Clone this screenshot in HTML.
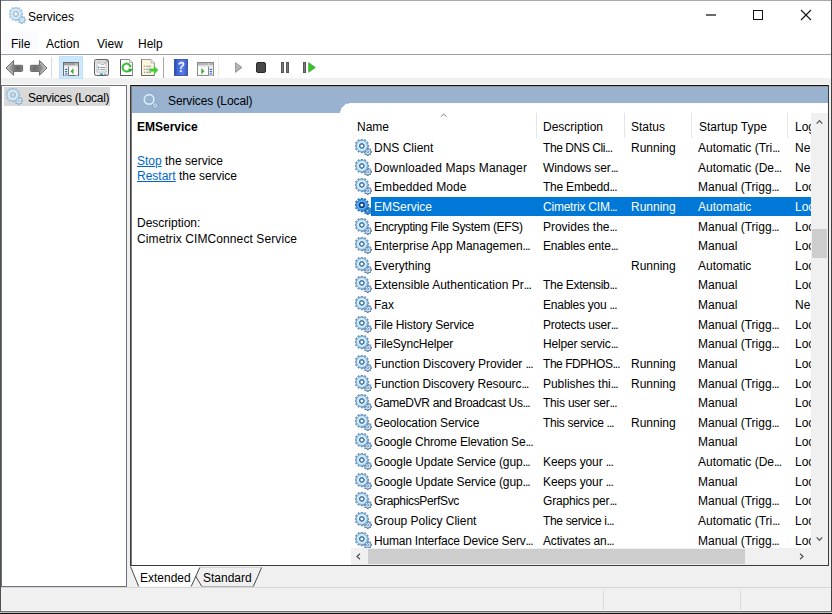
<!DOCTYPE html>
<html><head><meta charset="utf-8">
<style>
*{margin:0;padding:0;box-sizing:border-box}
html,body{width:832px;height:614px;overflow:hidden;background:#fff}
body{position:relative;font-family:"Liberation Sans",sans-serif;font-size:12px;color:#000}
.a{position:absolute}
.t{position:absolute;white-space:nowrap;line-height:15px}
.gi{position:absolute;left:4px;top:1px;width:17px;height:17px}
.row{position:absolute;left:351px;width:460px;height:19.63px;white-space:nowrap}
.row span{position:absolute;top:3px;line-height:15px}
.c1{left:23px} .c2{left:192px} .c3{left:280px} .c4{left:347px} .c5{left:444px}
.sel .c1,.sel .c2,.sel .c3,.sel .c4,.sel .c5{color:#fff}
.selbg{position:absolute;left:371px;width:440px;height:19px;background:#0078d7}
.hdr{position:absolute;top:120px;white-space:nowrap;line-height:15px}
.csep{position:absolute;top:113px;width:1px;height:25px;background:#e5e5e5}
.link{color:#0066cc;text-decoration:underline}
.el{font-style:normal;letter-spacing:-1px}
</style></head><body>
<svg width="0" height="0" style="position:absolute">
<defs>
<radialGradient id="gg" gradientUnits="userSpaceOnUse" cx="6.85" cy="6.95" r="7">
<stop offset="0.3" stop-color="#4a78a8"/><stop offset="0.42" stop-color="#d9f3fd"/><stop offset="0.68" stop-color="#c4e6f8"/><stop offset="0.84" stop-color="#86b3dc"/><stop offset="1" stop-color="#5584b8"/>
</radialGradient>
<radialGradient id="gsm" gradientUnits="userSpaceOnUse" cx="12.7" cy="12.8" r="3.9">
<stop offset="0.3" stop-color="#ffffff"/><stop offset="0.6" stop-color="#c8e4f6"/><stop offset="1" stop-color="#6f9ccb"/>
</radialGradient>
<radialGradient id="gl" gradientUnits="userSpaceOnUse" cx="6.85" cy="6.95" r="7">
<stop offset="0.3" stop-color="#ffffff"/><stop offset="0.42" stop-color="#b9cbd9"/><stop offset="0.52" stop-color="#e2f3fc"/><stop offset="0.78" stop-color="#c2e2f6"/><stop offset="1" stop-color="#92bde2"/>
</radialGradient>
<radialGradient id="gs" gradientUnits="userSpaceOnUse" cx="6.8" cy="7.1" r="7">
<stop offset="0.35" stop-color="#0b4f9a"/><stop offset="0.5" stop-color="#6ab8f5"/><stop offset="0.75" stop-color="#3d95e6"/><stop offset="1" stop-color="#1a6fc4"/>
</radialGradient>
<symbol id="gear" viewBox="0 0 17 17">
<path d="M15.53,12.15 L16.53,12.09 L16.53,13.51 L15.53,13.45 L15.16,14.34 L15.91,15.01 L14.91,16.01 L14.24,15.26 L13.35,15.63 L13.41,16.63 L11.99,16.63 L12.05,15.63 L11.16,15.26 L10.49,16.01 L9.49,15.01 L10.24,14.34 L9.87,13.45 L8.87,13.51 L8.87,12.09 L9.87,12.15 L10.24,11.26 L9.49,10.59 L10.49,9.59 L11.16,10.34 L12.05,9.97 L11.99,8.97 L13.41,8.97 L13.35,9.97 L14.24,10.34 L14.91,9.59 L15.91,10.59 L15.16,11.26Z M11.60,12.80 a1.1,1.1 0 1,0 2.2,0 a1.1,1.1 0 1,0 -2.2,0Z" fill="url(#gsm)" fill-rule="evenodd" stroke="#47729f" stroke-width="0.8"/>
<path d="M12.30,6.20 L13.81,6.17 L13.81,7.73 L12.30,7.70 L11.95,9.02 L13.26,9.76 L12.49,11.10 L11.19,10.33 L10.23,11.29 L11.00,12.59 L9.66,13.36 L8.92,12.05 L7.60,12.40 L7.63,13.91 L6.07,13.91 L6.10,12.40 L4.78,12.05 L4.04,13.36 L2.70,12.59 L3.47,11.29 L2.51,10.33 L1.21,11.10 L0.44,9.76 L1.75,9.02 L1.40,7.70 L-0.11,7.73 L-0.11,6.17 L1.40,6.20 L1.75,4.88 L0.44,4.14 L1.21,2.80 L2.51,3.57 L3.47,2.61 L2.70,1.31 L4.04,0.54 L4.78,1.85 L6.10,1.50 L6.07,-0.01 L7.63,-0.01 L7.60,1.50 L8.92,1.85 L9.66,0.54 L11.00,1.31 L10.23,2.61 L11.19,3.57 L12.49,2.80 L13.26,4.14 L11.95,4.88Z M5.05,6.95 a1.8,1.8 0 1,0 3.6,0 a1.8,1.8 0 1,0 -3.6,0Z" fill="url(#gg)" fill-rule="evenodd" stroke="#5b88b6" stroke-width="0.7"/>
<circle cx="6.85" cy="6.95" r="2.4" fill="none" stroke="#3d6b9c" stroke-width="0.9"/>
</symbol>
<symbol id="gearL" viewBox="0 0 17 17">
<path d="M15.53,12.15 L16.53,12.09 L16.53,13.51 L15.53,13.45 L15.16,14.34 L15.91,15.01 L14.91,16.01 L14.24,15.26 L13.35,15.63 L13.41,16.63 L11.99,16.63 L12.05,15.63 L11.16,15.26 L10.49,16.01 L9.49,15.01 L10.24,14.34 L9.87,13.45 L8.87,13.51 L8.87,12.09 L9.87,12.15 L10.24,11.26 L9.49,10.59 L10.49,9.59 L11.16,10.34 L12.05,9.97 L11.99,8.97 L13.41,8.97 L13.35,9.97 L14.24,10.34 L14.91,9.59 L15.91,10.59 L15.16,11.26Z M11.60,12.80 a1.1,1.1 0 1,0 2.2,0 a1.1,1.1 0 1,0 -2.2,0Z" fill="url(#gsm)" fill-rule="evenodd" stroke="#86aacb" stroke-width="0.6"/>
<path d="M12.30,6.20 L13.81,6.17 L13.81,7.73 L12.30,7.70 L11.95,9.02 L13.26,9.76 L12.49,11.10 L11.19,10.33 L10.23,11.29 L11.00,12.59 L9.66,13.36 L8.92,12.05 L7.60,12.40 L7.63,13.91 L6.07,13.91 L6.10,12.40 L4.78,12.05 L4.04,13.36 L2.70,12.59 L3.47,11.29 L2.51,10.33 L1.21,11.10 L0.44,9.76 L1.75,9.02 L1.40,7.70 L-0.11,7.73 L-0.11,6.17 L1.40,6.20 L1.75,4.88 L0.44,4.14 L1.21,2.80 L2.51,3.57 L3.47,2.61 L2.70,1.31 L4.04,0.54 L4.78,1.85 L6.10,1.50 L6.07,-0.01 L7.63,-0.01 L7.60,1.50 L8.92,1.85 L9.66,0.54 L11.00,1.31 L10.23,2.61 L11.19,3.57 L12.49,2.80 L13.26,4.14 L11.95,4.88Z M5.05,6.95 a1.8,1.8 0 1,0 3.6,0 a1.8,1.8 0 1,0 -3.6,0Z" fill="url(#gl)" fill-rule="evenodd" stroke="#8db3d6" stroke-width="0.6"/>
<circle cx="6.85" cy="6.95" r="2.7" fill="none" stroke="#a3b9cb" stroke-width="0.9"/>
</symbol>
<symbol id="gearG" viewBox="0 0 17 17">
<circle cx="12.2" cy="13.5" r="3" fill="none" stroke="#6f88a6" stroke-width="0.9" stroke-dasharray="0.8 1.1"/>
<circle cx="12.2" cy="13.5" r="1.7" fill="none" stroke="#d2e8f3" stroke-width="1"/>
<circle cx="6.1" cy="7.4" r="6.4" fill="none" stroke="#7d95b0" stroke-width="0.8" stroke-dasharray="0.9 2" opacity="0.8"/>
<circle cx="6.1" cy="7.4" r="4.7" fill="none" stroke="#d4eef9" stroke-width="1.9"/>
<circle cx="6.1" cy="7.4" r="3.6" fill="none" stroke="#8fa8c2" stroke-width="0.6"/>
</symbol>
<symbol id="gearS" viewBox="0 0 17 17">
<path d="M15.53,12.15 L16.53,12.09 L16.53,13.51 L15.53,13.45 L15.16,14.34 L15.91,15.01 L14.91,16.01 L14.24,15.26 L13.35,15.63 L13.41,16.63 L11.99,16.63 L12.05,15.63 L11.16,15.26 L10.49,16.01 L9.49,15.01 L10.24,14.34 L9.87,13.45 L8.87,13.51 L8.87,12.09 L9.87,12.15 L10.24,11.26 L9.49,10.59 L10.49,9.59 L11.16,10.34 L12.05,9.97 L11.99,8.97 L13.41,8.97 L13.35,9.97 L14.24,10.34 L14.91,9.59 L15.91,10.59 L15.16,11.26Z M11.60,12.80 a1.1,1.1 0 1,0 2.2,0 a1.1,1.1 0 1,0 -2.2,0Z" fill="#3d8fe0" fill-rule="evenodd" stroke="#0d5aa8" stroke-width="0.7"/>
<path d="M12.30,6.20 L13.81,6.17 L13.81,7.73 L12.30,7.70 L11.95,9.02 L13.26,9.76 L12.49,11.10 L11.19,10.33 L10.23,11.29 L11.00,12.59 L9.66,13.36 L8.92,12.05 L7.60,12.40 L7.63,13.91 L6.07,13.91 L6.10,12.40 L4.78,12.05 L4.04,13.36 L2.70,12.59 L3.47,11.29 L2.51,10.33 L1.21,11.10 L0.44,9.76 L1.75,9.02 L1.40,7.70 L-0.11,7.73 L-0.11,6.17 L1.40,6.20 L1.75,4.88 L0.44,4.14 L1.21,2.80 L2.51,3.57 L3.47,2.61 L2.70,1.31 L4.04,0.54 L4.78,1.85 L6.10,1.50 L6.07,-0.01 L7.63,-0.01 L7.60,1.50 L8.92,1.85 L9.66,0.54 L11.00,1.31 L10.23,2.61 L11.19,3.57 L12.49,2.80 L13.26,4.14 L11.95,4.88Z M5.05,6.95 a1.8,1.8 0 1,0 3.6,0 a1.8,1.8 0 1,0 -3.6,0Z" fill="url(#gs)" fill-rule="evenodd" stroke="#0d5aa8" stroke-width="0.6"/>
<circle cx="6.8" cy="7.1" r="2.5" fill="none" stroke="#0a3f80" stroke-width="1.1"/>
</symbol>
</defs></svg>

<!-- window borders -->
<div class="a" style="left:0;top:0;width:832px;height:1px;background:#a9a9a9"></div>
<div class="a" style="left:0;top:0;width:19px;height:1px;background:#7a8698"></div>
<div class="a" style="left:0;top:0;width:1px;height:614px;background:#505050"></div>
<div class="a" style="left:831px;top:0;width:1px;height:614px;background:#404040"></div>

<!-- title bar -->
<svg class="a" style="left:9px;top:7px;width:17px;height:17px" viewBox="0 0 17 17"><use href="#gearL"/></svg>
<div class="t" style="left:28px;top:10px">Services</div>
<div class="a" style="left:706px;top:14px;width:10px;height:2px;background:#6a6a6a"></div>
<div class="a" style="left:753px;top:10px;width:10px;height:10px;border:1px solid #111"></div>
<svg class="a" style="left:800px;top:9px;width:12px;height:12px" viewBox="0 0 12 12"><path d="M1,1 L11,11 M11,1 L1,11" stroke="#111" stroke-width="1.1"/></svg>

<!-- menu -->
<div class="a" style="left:3px;top:31px;width:35px;height:22px;background:#f9fbfe"></div>
<div class="t" style="left:11px;top:37px">File</div>
<div class="t" style="left:46px;top:37px">Action</div>
<div class="t" style="left:97px;top:37px">View</div>
<div class="t" style="left:138px;top:37px">Help</div>
<div class="a" style="left:1px;top:54px;width:830px;height:1px;background:#a0a0a0"></div>

<!-- toolbar -->
<div class="a" style="left:1px;top:78px;width:830px;height:6px;background:#f0f0f0"></div>
<div class="a" style="left:1px;top:84px;width:830px;height:1px;background:#fcfcfc"></div>
<div class="a" style="left:1px;top:85px;width:830px;height:502px;background:#f0f0f0"></div>

<svg width="0" height="0" style="position:absolute"><defs>
<radialGradient id="arrR" cx="0.72" cy="0.52" r="0.6"><stop offset="0" stop-color="#5e5e5e"/><stop offset="0.6" stop-color="#8c8c8c"/><stop offset="1" stop-color="#b8b8b8"/></radialGradient><radialGradient id="arrL" cx="0.28" cy="0.52" r="0.6"><stop offset="0" stop-color="#6a6a6a"/><stop offset="0.6" stop-color="#8c8c8c"/><stop offset="1" stop-color="#b8b8b8"/></radialGradient>
<linearGradient id="hlp" x1="0" y1="0" x2="1" y2="0"><stop offset="0" stop-color="#2443a8"/><stop offset="0.2" stop-color="#3f65d6"/><stop offset="0.6" stop-color="#5b80e6"/><stop offset="1" stop-color="#3557c4"/></linearGradient>
<linearGradient id="tb" x1="0" y1="0" x2="0" y2="1"><stop offset="0" stop-color="#b8b8b8"/><stop offset="1" stop-color="#8e8e8e"/></linearGradient>
</defs></svg>
<!-- back/fwd -->
<svg class="a" style="left:5px;top:59px;width:19px;height:18px" viewBox="0 0 19 18"><path d="M1,9 L8.6,1.5 L8.6,6.3 L16.8,6.3 Q17.6,6.3 17.6,7.1 L17.6,11.6 Q17.6,12.4 16.8,12.4 L8.6,12.4 L8.6,16.3Z" fill="url(#arrR)" stroke="#6a6a6a" stroke-width="1" stroke-linejoin="round"/><path d="M2.6,9 L7.6,4 M2.6,9 L7.6,14" stroke="#c8c8c8" stroke-width="0.7" fill="none"/></svg>
<svg class="a" style="left:29px;top:59px;width:19px;height:18px" viewBox="0 0 19 18"><path d="M18,9 L10.4,1.5 L10.4,6.3 L2.2,6.3 Q1.4,6.3 1.4,7.1 L1.4,11.6 Q1.4,12.4 2.2,12.4 L10.4,12.4 L10.4,16.3Z" fill="url(#arrL)" stroke="#6a6a6a" stroke-width="1" stroke-linejoin="round"/><path d="M16.4,9 L11.4,4 M16.4,9 L11.4,14" stroke="#c8c8c8" stroke-width="0.7" fill="none"/></svg>
<div class="a" style="left:51px;top:57px;width:1px;height:21px;background:#dadada"></div>
<!-- selected show/hide tree -->
<div class="a" style="left:59px;top:56px;width:24px;height:23px;background:#cce8ff;border:1px solid #c0e0fc"></div>
<svg class="a" style="left:63px;top:62px;width:16px;height:14px" viewBox="0 0 16 14"><rect x="0.5" y="0.5" width="15" height="13" fill="#fff" stroke="#6e6e6e"/><rect x="1" y="1" width="14" height="2.5" fill="#9c9c9c"/><rect x="12" y="1.3" width="1" height="2" fill="#d0d0d0"/><rect x="13.6" y="1.3" width="1" height="2" fill="#d0d0d0"/><rect x="1" y="3.5" width="14" height="1.2" fill="#dcdcdc"/><rect x="1" y="4.7" width="4.5" height="8.8" fill="#f2f2f2"/><line x1="5.5" y1="4.5" x2="5.5" y2="13.5" stroke="#7a7a7a"/><rect x="2" y="6.8" width="2.4" height="1.2" rx="0.5" fill="#2f6fd0"/><rect x="2" y="9" width="2.4" height="1.2" rx="0.5" fill="#2f6fd0"/><rect x="2" y="11.2" width="2.4" height="1.2" rx="0.5" fill="#2f6fd0"/><path d="M7.5,9.2 L10.5,6 L10.5,12.4Z" fill="#3cb034"/><rect x="12.5" y="4.7" width="2.5" height="8.8" fill="#f4f4f4"/></svg>
<!-- properties -->
<svg class="a" style="left:94px;top:59px;width:15px;height:17px" viewBox="0 0 15 17"><rect x="0.5" y="0.5" width="14" height="16" rx="1.8" fill="#efefef" stroke="#5e5e5e"/><rect x="1.2" y="1.2" width="12.6" height="3" fill="#d6d6d6"/><path d="M3,5.5 L4,4 L6,4 L7,5.5 L10,5.5 L10,4 L12,4 L12,13 L3,13Z" fill="#fafafa" stroke="#9a9a9a" stroke-width="0.6"/><circle cx="4.7" cy="8.4" r="0.8" fill="#1e90ff"/><rect x="6.3" y="8" width="4.6" height="0.9" fill="#8a8a8a"/><circle cx="4.7" cy="10.6" r="0.7" fill="#777"/><rect x="6.3" y="10.2" width="4.6" height="0.9" fill="#8a8a8a"/><rect x="6" y="14.5" width="3" height="1.6" fill="#1ea2e8"/><rect x="10" y="14.5" width="2.5" height="1.6" fill="#b0b0b0"/><rect x="12.6" y="0.8" width="1" height="2" fill="#666"/></svg>
<!-- refresh -->
<svg class="a" style="left:120px;top:59px;width:14px;height:17px" viewBox="0 0 14 17"><path d="M0.5,0.5 L9.5,0.5 L12.5,3.5 L12.5,16.5 L0.5,16.5Z" fill="#fff" stroke="#8e8e8e"/><path d="M0.5,16.5 L12.5,16.5 M0.5,0.5 L0.5,16.5" stroke="#5a5a5a" stroke-width="1" fill="none"/><path d="M9.5,0.5 L9.5,3.5 L12.5,3.5" fill="#e8e8e8" stroke="#a8a8a8" stroke-width="0.8"/><path d="M9.6,11.2 A4,4 0 1,1 10.6,8.4" fill="none" stroke="#3bbf3b" stroke-width="2.1"/><path d="M8.2,9.6 L12.8,10 L10,13.4Z" fill="#2aa52a"/></svg>
<!-- export -->
<svg class="a" style="left:141px;top:59px;width:18px;height:17px" viewBox="0 0 18 17"><path d="M0.5,0.5 L10,0.5 L13.5,4 L13.5,16.5 L0.5,16.5Z" fill="#fbf6da" stroke="#9a9a9a"/><path d="M0.5,16.5 L13.5,16.5 M0.5,0.5 L0.5,16.5" stroke="#6a6a6a" stroke-width="1" fill="none"/><path d="M10,0.5 L10,4 L13.5,4" fill="#ececec" stroke="#b0b0b0" stroke-width="0.8"/><rect x="2.8" y="6.8" width="1.2" height="0.9" fill="#777"/><rect x="5" y="6.8" width="5" height="0.9" fill="#8a8fb8"/><rect x="2.8" y="9.8" width="1.2" height="0.9" fill="#777"/><rect x="5" y="9.8" width="5" height="0.9" fill="#8a8fb8"/><rect x="2.8" y="12.8" width="1.2" height="0.9" fill="#777"/><rect x="5" y="12.8" width="5" height="0.9" fill="#8a8fb8"/><path d="M8.5,9.8 L13,9.8 L13,6.8 L17.2,11.2 L13,15.4 L13,12.6 L8.5,12.6Z" fill="#4ac83e" stroke="#5fd655" stroke-width="0.4"/></svg>
<div class="a" style="left:163px;top:57px;width:1px;height:21px;background:#a8a8a8"></div>
<!-- help -->
<svg class="a" style="left:174px;top:59px;width:14px;height:17px" viewBox="0 0 14 17"><rect x="0.5" y="0.5" width="13" height="16" fill="url(#hlp)" stroke="#2a44a0" stroke-width="0.8"/><path d="M4.2,5.4 Q4.4,2.8 7.4,2.8 Q10.4,2.8 10.4,5.2 Q10.4,6.8 8.6,7.8 Q7.6,8.4 7.6,10 L6,10 Q5.9,7.8 7.3,6.9 Q8.4,6.2 8.4,5.2 Q8.4,4.4 7.3,4.4 Q6.2,4.4 6.1,5.6Z" fill="#e8ecf8"/><rect x="5.9" y="11.2" width="1.9" height="1.8" fill="#e8ecf8"/></svg>
<!-- show action pane -->
<svg class="a" style="left:197px;top:62px;width:17px;height:14px" viewBox="0 0 17 14"><rect x="0.5" y="0.5" width="16" height="13" fill="#fff" stroke="#8c8c8c"/><rect x="1" y="1" width="15" height="2.5" fill="#b4b4b4"/><rect x="11" y="1.2" width="0.8" height="2.2" fill="#e0e0e0"/><rect x="1" y="3.5" width="15" height="1.2" fill="#dedede"/><rect x="11.5" y="4.7" width="4.5" height="8.8" fill="#f2f2f2"/><line x1="11.5" y1="4.5" x2="11.5" y2="13.5" stroke="#8a8a8a"/><rect x="12.7" y="6.8" width="2.4" height="1.2" rx="0.5" fill="#2f6fd0"/><rect x="12.7" y="9" width="2.4" height="1.2" rx="0.5" fill="#2f6fd0"/><rect x="12.7" y="11.2" width="2.4" height="1.2" rx="0.5" fill="#2f6fd0"/><path d="M4.3,6 L7.5,9.2 L4.3,12.4Z" fill="#3cb034"/></svg>
<div class="a" style="left:218px;top:57px;width:1px;height:21px;background:#ececec"></div>
<!-- play -->
<svg class="a" style="left:234px;top:62px;width:9px;height:11px" viewBox="0 0 9 11"><path d="M1.5,0.6 L8,5.5 L1.5,10.4Z" fill="#b4b4b4" stroke="#8a8a8a" stroke-width="0.8" stroke-linejoin="round"/></svg>
<!-- stop -->
<div class="a" style="left:256px;top:62px;width:10px;height:11px;background:#474747;border:1px solid #2a2a2a;border-radius:2px"></div>
<!-- pause -->
<div class="a" style="left:281px;top:62px;width:3px;height:11px;background:#7a7a7a;border:1px solid #555"></div>
<div class="a" style="left:286px;top:62px;width:3px;height:11px;background:#7a7a7a;border:1px solid #555"></div>
<!-- restart -->
<div class="a" style="left:303px;top:62px;width:3px;height:11px;background:#7a7a7a;border:1px solid #555"></div>
<svg class="a" style="left:308px;top:62px;width:8px;height:11px" viewBox="0 0 8 11"><path d="M0.6,0.6 L7.4,5.5 L0.6,10.4Z" fill="#3cbf2f" stroke="#34a82a" stroke-width="0.6" stroke-linejoin="round"/></svg>


<!-- left pane -->
<div class="a" style="left:1px;top:85px;width:126px;height:502px;border:1px solid #6d737e;background:#fff"></div>
<div class="a" style="left:4px;top:87px;width:106px;height:19px;background:#d9d9d9"></div>
<svg class="a" style="left:6px;top:88px;width:17px;height:17px" viewBox="0 0 17 17"><use href="#gearL"/></svg>
<div class="t" style="left:28px;top:91px;letter-spacing:-0.3px">Services (Local)</div>

<!-- right pane -->
<div class="a" style="left:130px;top:85px;width:699px;height:481px;background:#fff;border-left:1px solid #3a3a3a;border-top:1px solid #111;border-right:1px solid #3c3c3c;border-bottom:1px solid #3c3c3c"></div>
<div class="a" style="left:131px;top:86px;width:1px;height:479px;background:#7a7a7a"></div>
<div class="a" style="left:131px;top:86px;width:697px;height:1px;background:#9a9a9a"></div>
<div class="a" style="left:132px;top:87px;width:696px;height:26px;background:#98b2d0"></div>
<svg class="a" style="left:338px;top:102px;width:490px;height:12px" viewBox="338 102 490 12"><path d="M339.9,113 L339.9,111.5 L341,110.5 L341,108.5 L346,103.8 L349,103.8 L349,103 L828,103 L828,113Z" fill="#fff"/></svg>
<svg class="a" style="left:143px;top:92px;width:17px;height:17px" viewBox="0 0 17 17"><use href="#gearG"/></svg>
<div class="t" style="left:168px;top:94px;letter-spacing:-0.1px">Services (Local)</div>

<div class="t" style="left:137px;top:120px;font-weight:bold">EMService</div>
<div class="t" style="left:137px;top:154px"><span class="link">Stop</span> the service</div>
<div class="t" style="left:137px;top:169px"><span class="link">Restart</span> the service</div>
<div class="t" style="left:137px;top:216px">Description:</div>
<div class="t" style="left:137px;top:232px;letter-spacing:0.1px">Cimetrix CIMConnect Service</div>

<!-- list clip -->
<div class="a" style="left:351px;top:113px;width:460px;height:435px;overflow:hidden">
<div style="position:absolute;left:-351px;top:-113px;width:832px;height:614px">
<!-- list header -->
<div class="hdr" style="left:357px">Name</div>
<div class="csep" style="left:536px"></div>
<div class="hdr" style="left:543px">Description</div>
<div class="csep" style="left:624px"></div>
<div class="hdr" style="left:631px">Status</div>
<div class="csep" style="left:691px"></div>
<div class="hdr" style="left:699px">Startup Type</div>
<div class="csep" style="left:787px"></div>
<div class="hdr" style="left:795px">Log On As</div>
<svg class="a" style="left:440px;top:113px;width:7px;height:5px" viewBox="0 0 7 5"><path d="M0.8,3.6 L3.7,1.1 L6.6,3.6" fill="none" stroke="#707070" stroke-width="0.9"/></svg>

<div class="selbg" style="top:197px"></div>
<div class="row" style="top:138.00px"><svg class="gi" viewBox="0 0 17 17"><use href="#gear"/></svg><span class="c1" style="letter-spacing:0.0px">DNS Client</span><span class="c2" style="letter-spacing:-0.427px">The DNS Cli<i class="el">...</i></span><span class="c3">Running</span><span class="c4">Automatic (Tri<i class="el">...</i></span><span class="c5">Ne</span></div>
<div class="row" style="top:157.63px"><svg class="gi" viewBox="0 0 17 17"><use href="#gear"/></svg><span class="c1" style="letter-spacing:0.127px">Downloaded Maps Manager</span><span class="c2" style="letter-spacing:-0.091px">Windows ser<i class="el">...</i></span><span class="c3"></span><span class="c4">Automatic (De<i class="el">...</i></span><span class="c5">Ne</span></div>
<div class="row" style="top:177.26px"><svg class="gi" viewBox="0 0 17 17"><use href="#gear"/></svg><span class="c1" style="letter-spacing:0.092px">Embedded Mode</span><span class="c2" style="letter-spacing:-0.223px">The Embedd<i class="el">...</i></span><span class="c3"></span><span class="c4">Manual (Trigg<i class="el">...</i></span><span class="c5">Loc</span></div>
<div class="row sel" style="top:196.89px"><svg class="gi" viewBox="0 0 17 17"><use href="#gearS"/></svg><span class="c1" style="letter-spacing:0.0px">EMService</span><span class="c2" style="letter-spacing:-0.22px">Cimetrix CIM<i class="el">...</i></span><span class="c3">Running</span><span class="c4">Automatic</span><span class="c5">Loc</span></div>
<div class="row" style="top:216.52px"><svg class="gi" viewBox="0 0 17 17"><use href="#gear"/></svg><span class="c1" style="letter-spacing:-0.31px">Encrypting File System (EFS)</span><span class="c2" style="letter-spacing:-0.018px">Provides the<i class="el">...</i></span><span class="c3"></span><span class="c4">Manual (Trigg<i class="el">...</i></span><span class="c5">Loc</span></div>
<div class="row" style="top:236.15px"><svg class="gi" viewBox="0 0 17 17"><use href="#gear"/></svg><span class="c1" style="letter-spacing:-0.007px">Enterprise App Managemen<i class="el">...</i></span><span class="c2" style="letter-spacing:-0.198px">Enables ente<i class="el">...</i></span><span class="c3"></span><span class="c4">Manual</span><span class="c5">Loc</span></div>
<div class="row" style="top:255.78px"><svg class="gi" viewBox="0 0 17 17"><use href="#gear"/></svg><span class="c1" style="letter-spacing:0.0px">Everything</span><span class="c2" style="letter-spacing:0.0px"></span><span class="c3">Running</span><span class="c4">Automatic</span><span class="c5">Loc</span></div>
<div class="row" style="top:275.41px"><svg class="gi" viewBox="0 0 17 17"><use href="#gear"/></svg><span class="c1" style="letter-spacing:0.012px">Extensible Authentication Pr<i class="el">...</i></span><span class="c2" style="letter-spacing:-0.297px">The Extensib<i class="el">...</i></span><span class="c3"></span><span class="c4">Manual</span><span class="c5">Loc</span></div>
<div class="row" style="top:295.04px"><svg class="gi" viewBox="0 0 17 17"><use href="#gear"/></svg><span class="c1" style="letter-spacing:0.0px">Fax</span><span class="c2" style="letter-spacing:-0.242px">Enables you <i class="el">...</i></span><span class="c3"></span><span class="c4">Manual</span><span class="c5">Ne</span></div>
<div class="row" style="top:314.67px"><svg class="gi" viewBox="0 0 17 17"><use href="#gear"/></svg><span class="c1" style="letter-spacing:-0.163px">File History Service</span><span class="c2" style="letter-spacing:-0.232px">Protects user<i class="el">...</i></span><span class="c3"></span><span class="c4">Manual (Trigg<i class="el">...</i></span><span class="c5">Loc</span></div>
<div class="row" style="top:334.30px"><svg class="gi" viewBox="0 0 17 17"><use href="#gear"/></svg><span class="c1" style="letter-spacing:-0.156px">FileSyncHelper</span><span class="c2" style="letter-spacing:-0.181px">Helper servic<i class="el">...</i></span><span class="c3"></span><span class="c4">Manual (Trigg<i class="el">...</i></span><span class="c5">Loc</span></div>
<div class="row" style="top:353.93px"><svg class="gi" viewBox="0 0 17 17"><use href="#gear"/></svg><span class="c1" style="letter-spacing:-0.068px">Function Discovery Provider <i class="el">...</i></span><span class="c2" style="letter-spacing:-0.45px">The FDPHOS<i class="el">...</i></span><span class="c3">Running</span><span class="c4">Manual</span><span class="c5">Loc</span></div>
<div class="row" style="top:373.56px"><svg class="gi" viewBox="0 0 17 17"><use href="#gear"/></svg><span class="c1" style="letter-spacing:-0.103px">Function Discovery Resourc<i class="el">...</i></span><span class="c2" style="letter-spacing:-0.028px">Publishes thi<i class="el">...</i></span><span class="c3">Running</span><span class="c4">Manual (Trigg<i class="el">...</i></span><span class="c5">Loc</span></div>
<div class="row" style="top:393.19px"><svg class="gi" viewBox="0 0 17 17"><use href="#gear"/></svg><span class="c1" style="letter-spacing:-0.34px">GameDVR and Broadcast Us<i class="el">...</i></span><span class="c2" style="letter-spacing:-0.222px">This user ser<i class="el">...</i></span><span class="c3"></span><span class="c4">Manual</span><span class="c5">Loc</span></div>
<div class="row" style="top:412.82px"><svg class="gi" viewBox="0 0 17 17"><use href="#gear"/></svg><span class="c1" style="letter-spacing:-0.11px">Geolocation Service</span><span class="c2" style="letter-spacing:-0.291px">This service <i class="el">...</i></span><span class="c3">Running</span><span class="c4">Manual (Trigg<i class="el">...</i></span><span class="c5">Loc</span></div>
<div class="row" style="top:432.45px"><svg class="gi" viewBox="0 0 17 17"><use href="#gear"/></svg><span class="c1" style="letter-spacing:-0.152px">Google Chrome Elevation Se<i class="el">...</i></span><span class="c2" style="letter-spacing:0.0px"></span><span class="c3"></span><span class="c4">Manual</span><span class="c5">Loc</span></div>
<div class="row" style="top:452.08px"><svg class="gi" viewBox="0 0 17 17"><use href="#gear"/></svg><span class="c1" style="letter-spacing:-0.11px">Google Update Service (gup<i class="el">...</i></span><span class="c2" style="letter-spacing:-0.115px">Keeps your <i class="el">...</i></span><span class="c3"></span><span class="c4">Automatic (De<i class="el">...</i></span><span class="c5">Loc</span></div>
<div class="row" style="top:471.71px"><svg class="gi" viewBox="0 0 17 17"><use href="#gear"/></svg><span class="c1" style="letter-spacing:-0.11px">Google Update Service (gup<i class="el">...</i></span><span class="c2" style="letter-spacing:-0.115px">Keeps your <i class="el">...</i></span><span class="c3"></span><span class="c4">Manual</span><span class="c5">Loc</span></div>
<div class="row" style="top:491.34px"><svg class="gi" viewBox="0 0 17 17"><use href="#gear"/></svg><span class="c1" style="letter-spacing:-0.335px">GraphicsPerfSvc</span><span class="c2" style="letter-spacing:-0.193px">Graphics per<i class="el">...</i></span><span class="c3"></span><span class="c4">Manual (Trigg<i class="el">...</i></span><span class="c5">Loc</span></div>
<div class="row" style="top:510.97px"><svg class="gi" viewBox="0 0 17 17"><use href="#gear"/></svg><span class="c1" style="letter-spacing:-0.017px">Group Policy Client</span><span class="c2" style="letter-spacing:-0.342px">The service i<i class="el">...</i></span><span class="c3"></span><span class="c4">Automatic (Tri<i class="el">...</i></span><span class="c5">Loc</span></div>
<div class="row" style="top:530.60px"><svg class="gi" viewBox="0 0 17 17"><use href="#gear"/></svg><span class="c1" style="letter-spacing:-0.194px">Human Interface Device Serv<i class="el">...</i></span><span class="c2" style="letter-spacing:-0.157px">Activates an<i class="el">...</i></span><span class="c3"></span><span class="c4">Manual (Trigg<i class="el">...</i></span><span class="c5">Loc</span></div>
</div></div>

<!-- v scrollbar -->
<div class="a" style="left:811px;top:113px;width:17px;height:452px;background:#f0f0f0"></div>
<svg class="a" style="left:816px;top:119px;width:7px;height:6px" viewBox="0 0 7 6"><path d="M0.7,4.6 L3.5,1.6 L6.3,4.6" fill="none" stroke="#505050" stroke-width="1.2"/></svg>
<div class="a" style="left:812px;top:229px;width:15px;height:29px;background:#cdcdcd"></div>
<svg class="a" style="left:816px;top:536px;width:7px;height:6px" viewBox="0 0 7 6"><path d="M0.7,1.4 L3.5,4.4 L6.3,1.4" fill="none" stroke="#505050" stroke-width="1.2"/></svg>
<!-- h scrollbar -->
<div class="a" style="left:351px;top:548px;width:477px;height:17px;background:#f0f0f0"></div>
<div class="a" style="left:368px;top:549px;width:377px;height:15px;background:#cdcdcd"></div>
<svg class="a" style="left:355px;top:553px;width:7px;height:7px" viewBox="0 0 7 7"><path d="M5,0.8 L2,3.5 L5,6.2" fill="none" stroke="#505050" stroke-width="1.2"/></svg>
<svg class="a" style="left:798px;top:553px;width:7px;height:7px" viewBox="0 0 7 7"><path d="M2,0.8 L5,3.5 L2,6.2" fill="none" stroke="#505050" stroke-width="1.2"/></svg>

<!-- tabs area -->
<div class="a" style="left:127px;top:566px;width:704px;height:21px;background:#f0f0f0"></div>
<svg class="a" style="left:127px;top:565px;width:140px;height:23px" viewBox="127 565 140 23">
<path d="M130.5,566 L138.7,586.5 L191.2,586.5 L199.8,566Z" fill="#fff"/>
<path d="M199.8,567.5 L261.6,567.5 L253.3,586.5 L201.9,586.5Z" fill="#f0f0f0"/>
<path d="M199.8,567.5 L261.6,567.5" stroke="#d4d4d4" stroke-width="1" fill="none"/>
<path d="M201.9,586.5 L253.3,586.5" stroke="#b4b4b4" stroke-width="1" fill="none"/>
<path d="M130.5,566.5 L138.7,586.5 M191.2,586.5 L199.8,567.5 M195.5,576 L201.9,586.5 M253.3,586.5 L261.6,567.5" stroke="#4a4a4a" stroke-width="1" fill="none"/>
</svg>
<div class="t" style="left:140px;top:571px">Extended</div>
<div class="t" style="left:203px;top:571px">Standard</div>

<!-- status bar -->
<div class="a" style="left:1px;top:587px;width:830px;height:1px;background:#d6d6d6"></div>
<div class="a" style="left:1px;top:588px;width:830px;height:22px;background:#f0f0f0"></div>
<div class="a" style="left:603px;top:589px;width:1px;height:21px;background:#dcdcdc"></div>
<div class="a" style="left:740px;top:589px;width:1px;height:21px;background:#dcdcdc"></div>
<div class="a" style="left:1px;top:610px;width:830px;height:1px;background:#fff"></div>
<div class="a" style="left:0;top:611px;width:832px;height:1px;background:#6e6e6e"></div>
<div class="a" style="left:0;top:612px;width:832px;height:1px;background:#c0c0c0"></div>
<div class="a" style="left:0;top:613px;width:832px;height:1px;background:#111"></div>
</body></html>
